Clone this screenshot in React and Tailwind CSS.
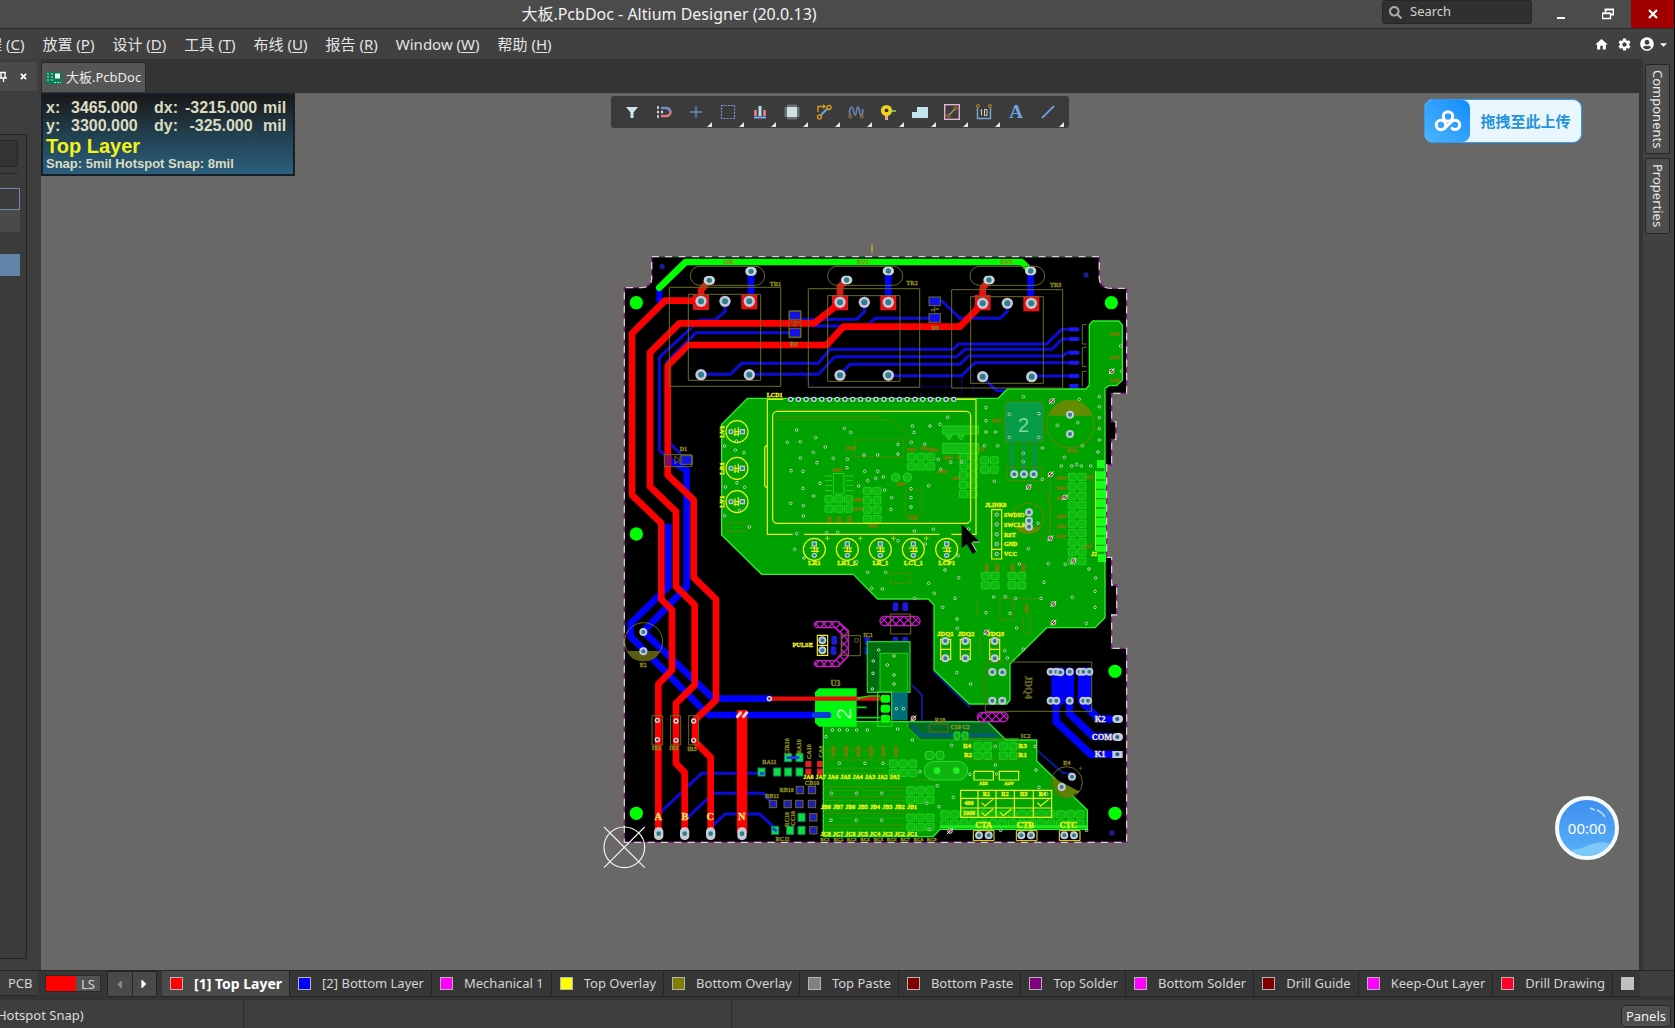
import React, { useState } from 'react';
import { FaSearch, FaUserCircle, FaCaretDown, FaCaretLeft, FaCaretRight } from 'react-icons/fa';
import { MdHome, MdSettings } from 'react-icons/md';

const MENU = [
  ['工程', 'C'],
  ['放置', 'P'],
  ['设计', 'D'],
  ['工具', 'T'],
  ['布线', 'U'],
  ['报告', 'R'],
  ['Window', 'W'],
  ['帮助', 'H'],
];

const LAYERS = [
  { name: '[1] Top Layer', swatch: 'bg-[#ff0000]' },
  { name: '[2] Bottom Layer', swatch: 'bg-[#0000ff]' },
  { name: 'Mechanical 1', swatch: 'bg-[#ff00ff]' },
  { name: 'Top Overlay', swatch: 'bg-[#ffff00]' },
  { name: 'Bottom Overlay', swatch: 'bg-[#808000]' },
  { name: 'Top Paste', swatch: 'bg-[#808080]' },
  { name: 'Bottom Paste', swatch: 'bg-[#800000]' },
  { name: 'Top Solder', swatch: 'bg-[#800080]' },
  { name: 'Bottom Solder', swatch: 'bg-[#ff00ff]' },
  { name: 'Drill Guide', swatch: 'bg-[#800000]' },
  { name: 'Keep-Out Layer', swatch: 'bg-[#ff00ff]' },
  { name: 'Drill Drawing', swatch: 'bg-[#ff002a]' },
];

/* ---------- toolbar icons ---------- */

const TOOLS = [
  {
    id: 'Filter',
    art: <path d="M2 3h12L9.500 8.500V14h-3V8.500z" fill="#cfe6ee" />,
  },
  {
    id: 'Snap',
    art: (
      <g fill="none" strokeWidth="2.400">
        <path d="M5 4h6" stroke="#6d8fc9" />
        <path d="M11 12H5" stroke="#e07a80" />
        <path d="M10.500 4a4 4 0 0 1 0 8" stroke="#e07a80" />
        <path d="M10 4a4 4 0 0 1 4 3.500" stroke="#6d8fc9" />
        <path d="M1 3.500h2M1 8h2M1 12.500h2M5 8h2" stroke="#d8d8d8" />
      </g>
    ),
  },
  { id: 'Move', menu: true, art: <path d="M8 2v12M2 8h12" stroke="#6d8fc9" strokeWidth="1.300" /> },
  {
    id: 'Select',
    menu: true,
    art: <rect x="1.500" y="1.500" width="13" height="13" fill="none" stroke="#7f93d6" strokeWidth="1.200" strokeDasharray="2 1.200" />,
  },
  {
    id: 'Align',
    menu: true,
    art: (
      <g>
        <path d="M2 13.500h12" stroke="#7fa8e8" strokeWidth="2" />
        <path d="M3.500 6v6M12.500 6v6" stroke="#e8808a" strokeWidth="2.600" />
        <path d="M8 2v10" stroke="#b7e2ea" strokeWidth="3" />
      </g>
    ),
  },
  {
    id: 'Component',
    menu: true,
    art: (
      <g>
        <path d="M4 .5v15M6 .5v15M8 .5v15M10 .5v15M12 .5v15M.5 4h15M.5 6h15M.5 8h15M.5 10h15M.5 12h15" stroke="#b9c7cc" strokeWidth=".8" />
        <rect x="3" y="3" width="10" height="10" rx="1" fill="#cfdfe4" />
      </g>
    ),
  },
  {
    id: 'Route',
    menu: true,
    art: (
      <g fill="none" strokeWidth="1.400">
        <path d="M5 11l7-7" stroke="#6aa6dc" strokeWidth="2" />
        <path d="M2 8V2.500h7M7 .8l2 1.700-2 1.700" stroke="#d8981c" />
        <circle cx="3.500" cy="13" r="2" stroke="#d8981c" />
        <circle cx="13" cy="3.500" r="2" stroke="#d8981c" />
      </g>
    ),
  },
  {
    id: 'Tune',
    menu: true,
    art: (
      <g fill="none" strokeWidth="1.600">
        <path d="M2 11C1 6 2 3 4 3s1 8 3 8 1-8 3-8 1 8 3 8 2-3 1.500-6" stroke="#6b86b8" />
        <circle cx="2.200" cy="12.500" r="1.500" stroke="#a8882c" strokeWidth="1" />
        <circle cx="13.800" cy="12.500" r="1.500" stroke="#a8882c" strokeWidth="1" />
      </g>
    ),
  },
  {
    id: 'Via',
    menu: true,
    art: (
      <g>
        <path d="M9 7h7" stroke="#6cc04a" strokeWidth="2" />
        <path d="M6.500 8v8" stroke="#e6a2a0" strokeWidth="3" />
        <circle cx="6.500" cy="6.500" r="3.800" fill="none" stroke="#f2d21c" strokeWidth="3.600" />
      </g>
    ),
  },
  { id: 'Polygon', menu: true, art: <path d="M0 14V8h5V3h11v11z" fill="#c4e4ec" /> },
  {
    id: 'Room',
    menu: true,
    art: (
      <g fill="none">
        <rect x=".7" y=".7" width="14.600" height="14.600" stroke="#e6b0d4" strokeWidth="1.400" />
        <path d="M5.500 10.500l5-5" stroke="#8fa06a" strokeWidth="1.400" />
        <circle cx="4.500" cy="11.500" r="1.500" stroke="#d8981c" />
        <circle cx="11.500" cy="4.500" r="1.500" stroke="#d8981c" />
      </g>
    ),
  },
  {
    id: 'Dimension',
    menu: true,
    art: (
      <g fill="none">
        <path d="M1.500 4v10.500h13V4" stroke="#79a7dc" strokeWidth="1.400" />
        <circle cx="2" cy="2" r="1.500" stroke="#c08c24" />
        <circle cx="14" cy="2" r="1.500" stroke="#c08c24" />
        <path d="M5.500 5.500v6M4.500 6.500l1-1M8.500 5.500h2.500v6H8.500z" stroke="#d8d2c0" />
      </g>
    ),
  },
  {
    id: 'Text',
    art: (
      <text x="10" y="17" textAnchor="middle" fontSize="19" fontWeight="bold" fontFamily="Liberation Serif, serif" fill="#6fa4e4">
        A
      </text>
    ),
  },
  { id: 'Line', menu: true, art: <path d="M2 14L14 2" stroke="#6c9be0" strokeWidth="1.800" /> },
];

function ToolBar() {
  return (
    <div className="flex h-8 rounded-[3px] bg-[#3b3b3b] px-[5px]" role="toolbar">
      {TOOLS.map((t) => (
        <button key={t.id} type="button" title={t.id} className="relative flex w-8 items-center justify-center">
          {t.id === 'Text' ? (
            <svg viewBox="0 0 20 22" className="h-[22px] w-5" aria-hidden>
              {t.art}
            </svg>
          ) : (
            <svg viewBox="0 0 16 16" className="h-4 w-4" aria-hidden>
              {t.art}
            </svg>
          )}
          {t.menu && (
            <svg viewBox="0 0 5 5" className="absolute right-0 bottom-px h-[5px] w-[5px]" aria-hidden>
              <path d="M5 0v5H0z" fill="#e4e4e4" />
            </svg>
          )}
        </button>
      ))}
    </div>
  );
}

/* ---------- board drawing, 3 units per screen pixel ---------- */

const RED = '#ff0000';
const BLUE = '#0000ff';
const OLIVE = '#6b6b1e';
const YEL = '#f4f41a';

const OUTLINE =
  'M155 50H1498V115Q1500 145 1535 145H1580V460H1535V545H1548V598H1535V675H1520V952H1535V1035H1550V1125H1535V1225H1580V1807H73V143H125Q155 140 155 115Z';

const TOP_POUR =
  'M443 475L365 553V885L485 1003H760L833 1077H985L1002 1095V1290L1108 1392H1220L1230 1380V1272L1340 1163H1485L1515 1133V445L1527 437H1550L1567 420V255L1557 243H1478L1468 255V435L1458 447H1222L1195 475Z';

const BOTTOM_POUR =
  'M690 1445H1162L1218 1500H1310V1563L1462 1710V1768H1020L1000 1790H670V1462Z';

const THIN_BLUE = [
  'M375 200V215L345 240H300L178 352V630L215 665',
  'M570 278H288L200 366V600L260 660',
  'M303 403H390L425 370H655L690 328H1060L1075 312H1340L1385 268H1435',
  'M448 403H655L705 350H1070L1095 328H1355L1387 297H1435',
  'M720 403L750 373H1080L1105 348H1390L1400 338H1435',
  'M865 407H1085L1125 368H1435',
  'M1295 408H1435',
  'M600 238H770L793 215V190M640 258H800L825 235H985',
  'M1025 183L1080 235H1200L1222 215V190',
  'M1148 412L1190 452H1230',
  'M178 1720L305 1600H480',
  'M255 1740L340 1660H490L515 1690',
  'M335 1760L375 1722H480L525 1765',
];

const RED_TRACES = [
  'M303 182H195L96 280V765L184 850V1078L216 1110V1290L175 1332V1770',
  'M718 190L642 250H238L150 338V740L228 815V1040L284 1095V1335L228 1390V1570L254 1597V1770',
  'M1148 190L1080 260H730L680 315H265L203 377V705L281 780V1012L348 1078V1380L285 1440V1505L332 1552V1770',
];

const ROUND_PADS = [
  [303, 184], [375, 184], [448, 184], [720, 187], [793, 187], [865, 187],
  [1148, 190], [1222, 190], [1294, 190], [303, 404], [448, 404], [720, 406],
  [865, 406], [1148, 410], [1295, 410],
];
const OVAL_PADS = [[328, 121], [453, 94], [740, 120], [865, 93], [1167, 120], [1292, 93]];
const RED_PADS = [[303, 186], [448, 184], [720, 187], [865, 187], [1148, 187], [1294, 190]];

const VIAS = [
  [590, 570], [562, 607], [601, 605], [647, 593], [676, 621], [640, 637], [601, 654], [651, 668], [700, 655], [742, 658],
  [733, 565], [752, 577], [573, 692], [609, 694], [660, 730], [609, 745], [641, 768], [572, 790], [741, 683], [794, 694],
  [833, 645], [792, 645], [833, 694], [827, 715], [776, 738], [409, 603], [406, 630], [374, 618], [432, 638], [411, 728],
  [376, 741], [434, 742], [374, 827], [418, 811], [448, 861], [590, 881], [584, 928], [612, 954], [680, 878], [713, 877],
  [803, 997], [815, 1045], [770, 965], [937, 558], [942, 577], [1020, 553], [1043, 532], [990, 558], [894, 613], [934, 607],
  [894, 642], [974, 613], [1015, 658], [1022, 688], [1052, 667], [1084, 666], [850, 711], [803, 722], [854, 750],
  [933, 746], [986, 737], [875, 773], [933, 773], [933, 801], [610, 797], [610, 828], [1158, 503], [1158, 542], [1158, 576],
  [1187, 576], [1153, 617], [1193, 617], [1270, 640], [1270, 665], [1183, 724], [1327, 718], [1270, 470], [1228, 523], [1317, 521],
  [1228, 592], [1316, 592], [1327, 624], [1372, 556], [1433, 548], [1447, 617], [1393, 652], [1430, 673], [1384, 678], [1415, 678],
  [1444, 678], [1472, 678], [1438, 478], [1498, 470], [1498, 500], [1498, 533], [1498, 566], [1498, 600], [1494, 636], [1565, 394],
  [1562, 318], [873, 808], [943, 873], [1000, 868], [894, 902], [1106, 867], [976, 912], [1075, 947], [1035, 990], [1076, 1013],
  [986, 1030], [857, 997], [847, 1047], [944, 1075], [1003, 1060], [1065, 1075], [1028, 1102], [1071, 1137], [1072, 1165],
  [1181, 1071], [1216, 1070], [1247, 1075], [1323, 1075], [1332, 1027], [1345, 971], [1396, 973], [1417, 1072], [1467, 987],
  [1487, 1014], [1485, 1054], [1485, 1102], [1459, 1150], [1285, 926], [1258, 972], [1314, 850], [1230, 1120], [1158, 1118],
  [1250, 1164], [1270, 1228], [1214, 1232], [1222, 1254], [1070, 1298], [1112, 1332], [836, 1230], [820, 1263], [819, 1300],
  [817, 1347], [882, 1248], [862, 1275], [882, 1305], [882, 1332], [889, 1406], [910, 1406], [697, 1470], [718, 1470], [742, 1470],
  [770, 1470], [802, 1470], [678, 1490], [893, 1467], [937, 1500], [1055, 1516], [1186, 1519], [1186, 1575], [1190, 1602],
  [1110, 1603], [1305, 1519], [1308, 1590], [1317, 1642], [1012, 1637], [980, 1690], [960, 1595], [718, 1570], [795, 1570],
  [849, 1570], [695, 1660], [769, 1660], [845, 1660], [693, 1741], [769, 1741], [845, 1741], [1060, 1672], [1340, 1662],
  [1202, 1771], [1460, 1771], [1017, 1700], [988, 1768],
];

const DRILLED = [[1535, 394], [1356, 483], [1352, 703], [1286, 741], [1395, 772], [1351, 895], [1420, 963], [1360, 1092], [1360, 1148], [1159, 1177], [940, 1435], [1050, 1773]];

// small groups of surface pads: x, y, columns, rows
const PAD_GROUPS = [
  [922, 640, 3, 2], [1080, 640, 2, 2], [1078, 695, 2, 3], [1142, 650, 2, 2], [1405, 700, 2, 10], [1144, 997, 2, 2],
  [1224, 997, 2, 2], [675, 767, 3, 2], [790, 742, 2, 4], [1122, 1508, 2, 2], [1198, 1508, 2, 2], [868, 1560, 3, 2],
  [920, 1640, 3, 2], [920, 1722, 3, 2], [1022, 1712, 15, 2],
];

const LED_ROW = [643, 742, 841, 940, 1040];
const LED_NAMES = ['LR1', 'LR1_L', 'LR_1', 'LC1_1', 'LCP1'];

function Track({ d, c, w }) {
  return <path d={d} fill="none" stroke={c} strokeWidth={w} strokeLinecap="round" strokeLinejoin="round" />;
}

function Pad({ x, y, r = 16, hole = 8 }) {
  return (
    <g>
      <circle cx={x} cy={y} r={r} fill="#c6c6dc" />
      <circle cx={x} cy={y} r={hole} fill="#2b7f86" />
    </g>
  );
}

function Label({ x, y, size = 18, c = YEL, anchor = 'middle', children, rotate }) {
  return (
    <text
      x={x}
      y={y}
      fontSize={size}
      fill={c}
      stroke={c}
      strokeWidth="1"
      textAnchor={anchor}
      fontWeight="bold"
      fontFamily="Liberation Serif, serif"
      transform={rotate ? `rotate(${rotate} ${x} ${y})` : undefined}
    >
      {children}
    </text>
  );
}

function Led({ x, y }) {
  return (
    <g>
      <circle cx={x} cy={y} r="33" fill="none" stroke={YEL} strokeWidth="3.500" />
      <rect x={x - 8} y={y - 24} width="16" height="16" fill="#b8ccd8" />
      <rect x={x - 4} y={y - 20} width="8" height="8" fill="#2b7f86" />
      <circle cx={x} cy={y + 18} r="8" fill="#b8ccd8" />
      <circle cx={x} cy={y + 18} r="4" fill="#2b7f86" />
      <path d={`M${x - 14} ${y - 4}h28M${x - 10} ${y + 6}h24M${x} ${y - 8}v16M${x + 8} ${y - 6}v16`} stroke={YEL} strokeWidth="3.500" />
    </g>
  );
}

function Board() {
  return (
    <svg viewBox="0 0 1620 1920" className="absolute top-[147px] left-[559px] h-[640px] w-[540px]" aria-label="PCB layout">
      <defs>
        <pattern id="mesh" width="24" height="24" patternUnits="userSpaceOnUse">
          <path d="M0 0l24 24M24 0L0 24" stroke="#c41ec4" strokeWidth="4" />
        </pattern>
        <pattern id="weave" width="6" height="6" patternUnits="userSpaceOnUse">
          <rect width="6" height="6" fill="#00a400" />
          <path d="M0 0h3v3H0z" fill="#009c00" />
        </pattern>
      </defs>

      <path d={OUTLINE} fill="#000" stroke="#8a1c8a" strokeWidth="4" />
      <path d={OUTLINE} fill="none" stroke="#d0d0d0" strokeWidth="4" strokeDasharray="22 18" />
      <path d="M155 50H1498" stroke="#1c6a2c" strokeWidth="4" strokeDasharray="18 22" strokeDashoffset="-22" />
      <path d="M816 13v25" stroke="#b8b830" strokeWidth="4" />

      {/* bottom copper */}
      <Track d="M1085 407V470M1120 400V460M600 390L640 440H1060" c="#06064c" w={5} />
      {THIN_BLUE.map((d) => (
        <Track key={d} d={d} c="#0c0cd8" w={9} />
      ))}
      <Track d="M178 145V180" c={BLUE} w={18} />
      <Track d="M453 94V184M865 93V187M1292 93V190" c={BLUE} w={20} />
      <Track d="M215 665L260 690V1040L130 1175L340 1376H508" c={BLUE} w={20} />
      <Track d="M205 860V1040L92 1150V1190L325 1425H685" c={BLUE} w={20} />
      <Track d="M1367 1295V1382M1383 1295V1382M1410 1295V1382M1447 1295V1382M1460 1295V1382" c={BLUE} w={26} />
      <Track d="M1368 1390V1445L1472 1543H1550M1408 1390V1420L1480 1490H1530M1450 1390L1495 1437H1530" c={BLUE} w={22} />
      <Track d="M1002 1295L1108 1400M935 1335L966 1365V1445M1310 1530L1390 1600H1415" c="#0a1a90" w={6} />
      {[[585, 226], [585, 278], [1004, 184], [1004, 234], [260, 660]].map(([x, y]) => (
        <rect key={`${x}-${y}`} x={x - 17} y={y - 13} width="34" height="26" fill="#1212e8" stroke={OLIVE} strokeWidth="3" />
      ))}
      {[268, 297, 338, 368, 408, 438].map((y) => (
        <rect key={y} x="1408" y={y - 6} width="28" height="12" fill="#1a1af0" />
      ))}
      {[[106, 349], [135, 349], [106, 452], [135, 452], [22, 452], [-80, 481], [-78, 450], [22, 481]].map(([x, y]) => (
        <rect key={`${x}-${y}`} x={x + 772} y={y + 738} width="17" height="26" rx="5" fill="#1a1ad8" />
      ))}

      {/* top copper */}
      <Track d="M178 143L257 66H1265L1292 93" c="#00ff00" w={20} />
      {RED_PADS.map(([x, y]) => (
        <rect key={`${x}-${y}`} x={x - 24} y={y - 22} width="48" height="46" fill="#e41414" />
      ))}
      {RED_TRACES.map((d) => (
        <Track key={d} d={d} c={RED} w={20} />
      ))}
      <Track d="M328 121L303 150V184M740 120L720 140V187M1167 120L1148 145V187" c="#e61414" w={20} />
      <path d="M426 1410V1780" stroke={RED} strokeWidth="31" />
      <rect x="195" y="645" width="20" height="32" fill="#8a0c5c" />

      {/* pours */}
      <path d={TOP_POUR} fill="url(#weave)" stroke="#2cf02c" strokeWidth="4" />
      <path d={BOTTOM_POUR} fill="url(#weave)" stroke="#2cf02c" strokeWidth="4" />
      <path d="M923 1446H1160L1216 1500H962L923 1462Z" fill="#006c24" stroke="#20c020" strokeWidth="3" />
      <path d="M935 1455L960 1486H1190" fill="none" stroke="#005c7c" strokeWidth="9" />
      <rect x="802" y="1205" width="128" height="152" fill="#006e10" stroke="#20d020" strokeWidth="4" />
      <rect x="840" y="1240" width="83" height="117" fill="#009a00" stroke="#20d020" strokeWidth="3" />
      <rect x="875" y="1357" width="48" height="84" fill="#007078" />
      <path d="M645 1357L657 1345H770V1460H657L645 1448Z" fill="#00f810" />
      <Track d="M508 1376H840" c="#e80c0c" w={13} />
      <path d="M645 1425H685" stroke="#0a3ce0" strokeWidth="18" strokeLinecap="round" />
      <path d="M770 1376L808 1368H840M770 1402H800M770 1433H840" stroke="#00e010" strokeWidth="5" fill="none" />
      <rect x="833" y="1355" width="42" height="104" fill="none" stroke="#20d020" strokeWidth="4" />
      {[1376, 1406, 1436].map((y) => (
        <rect key={y} x="842" y={y - 12} width="28" height="24" rx="6" fill="#00ff00" />
      ))}
      <text x="722" y="1421" fontSize="62" fill="#a8f0a8" fontFamily="Liberation Sans, sans-serif" textAnchor="middle" transform="rotate(-90 738 1405)">
        2
      </text>

      {/* bottom overlay seen through the pour */}
      <g fill="none" stroke="#508a00" strokeWidth="3">
        <path d="M525 540H870Q910 550 930 610M765 600H910V650H765ZM915 750h50v75h-50zM530 530H840M880 860V900L960 960" />
        <path d="M1300 740Q1345 750 1350 800V880M1310 910L1350 870V700M1200 1075h40v65h-40zM1220 1075H1330M1270 1130v50h20v-60" />
        <path d="M870 1000h60v30h-60zM1130 1075v60M1140 1190v60M380 848h60v25h-60z" />
        <path d="M680 1530h150M680 1560h180M670 1640h260M670 1670h260M670 1720h260M670 1755h260M940 1620h80M1100 1495h155v65h-155z" />
        <path d="M680 1600h180M680 1585h180M670 1652h250M670 1682h250M670 1734h250M670 1766h250" stroke="#2aa000" />
      </g>
      <rect x="1213" y="485" width="118" height="122" rx="12" fill="#089c48" stroke="#508a00" strokeWidth="3" />
      <path d="M1236 607V700M1272 607V700M1305 607V700" stroke="#0b9440" strokeWidth="14" />
      <rect x="1222" y="682" width="102" height="40" fill="none" stroke="#508a00" strokeWidth="3" />
      <text x="1271" y="577" fontSize="60" fill="#7cd89a" fontFamily="Liberation Sans, sans-serif" textAnchor="middle">
        2
      </text>
      <circle cx="1411" cy="553" r="71" fill="none" stroke="#508a00" strokeWidth="4" />
      <path d="M1344 527A71 71 0 0 1 1478 527Z" fill="#648c00" />
      <circle cx="1285" cy="835" r="46" fill="none" stroke="#508a00" strokeWidth="4" />
      <path d="M1246 860A46 46 0 0 0 1324 860Z" fill="#648c00" />
      {[[752, 625], [712, 691], [935, 630], [975, 626], [1000, 630], [1045, 653], [1085, 653], [1110, 653], [1027, 695], [1073, 715],
        [903, 733], [940, 835], [775, 780], [775, 808], [1085, 628], [1140, 628], [1190, 543], [1417, 633], [1385, 715], [1385, 745],
        [1385, 775], [1385, 830], [1385, 860], [1385, 890], [1465, 712], [1545, 283], [1545, 353], [1545, 422], [1460, 920],
        [820, 858]].map(([x, y]) => (
        <rect key={`${x}-${y}`} x={x - 14} y={y - 6} width="28" height="11" fill="#7c7c00" opacity=".8" />
      ))}
      {[688, 717, 748].map((x) => (
        <rect key={x} x={x - 6} y="828" width="12" height="24" fill="#7c7c00" opacity=".8" />
      ))}
      {[700, 738, 775, 813, 850, 888].map((x) => (
        <rect key={x} x={x - 6} y="1517" width="12" height="34" fill="#7c7c00" opacity=".8" />
      ))}
      {[[380, 978], [412, 978], [458, 978], [490, 978], [500, 1100]].map(([x, y]) => (
        <rect key={x} x={x + 774} y={y - 8} width="12" height="28" fill="#7c7c00" opacity=".8" />
      ))}

      {/* surface pads */}
      {PAD_GROUPS.map(([gx, gy, cols, rows]) =>
        Array.from({ length: cols * rows }, (_, i) => (
          <rect
            key={`${gx}-${gy}-${i}`}
            x={gx + (i % cols) * 29}
            y={gy + Math.floor(i / cols) * 28}
            width="24"
            height="22"
            rx="3"
            fill="#10b810"
            stroke="#22dc22"
            strokeWidth="2.500"
          />
        ))
      )}
      <g fill="#12bc12" stroke="#24e024" strokeWidth="2.500">
        <rect x="1028" y="558" width="108" height="24" />
        <rect x="1028" y="610" width="108" height="30" />
        <path d="M1036 586h22l-11 14zM1072 586h22l-11 14z" />
        <circle cx="887" cy="712" r="13" />
        <circle cx="922" cy="712" r="13" />
        <rect x="700" y="700" width="32" height="62" fill="none" />
        <path d="M674 708h22M674 722h22M674 737h22M674 752h22M738 708h22M738 722h22M738 737h22M738 752h22" />
      </g>
      <rect x="973" y="1564" width="130" height="56" rx="28" fill="#10b410" stroke="#28e028" strokeWidth="3" />
      <circle cx="1011" cy="1592" r="10" fill="#20f020" />
      <circle cx="1069" cy="1592" r="10" fill="#20f020" />
      <g fill="#10b410" stroke="#28e028" strokeWidth="3">
        <rect x="976" y="1534" width="26" height="24" rx="8" />
        <rect x="1008" y="1534" width="24" height="24" rx="8" />
        <rect x="1062" y="1476" width="18" height="22" rx="6" />
        <rect x="1086" y="1476" width="18" height="22" rx="6" />
      </g>
      <path d="M1020 1760H1462" stroke="#20e820" strokeWidth="8" />
      <path d="M1487 693V932" stroke={YEL} strokeWidth="3" />
      <path d="M1503 694V935" stroke="#18ff18" strokeWidth="30" strokeDasharray="24 4" />
      <path d="M1503 660v24M1506 942v24" stroke="#18ff18" strokeWidth="24" />

      {/* pads under the pulse block */}
      {[[564, 1553], [598, 1553], [531, 1596], [564, 1596], [598, 1596], [484, 1596], [604, 1732], [525, 1771], [570, 1771], [604, 1771]].map(([x, y]) => (
        <rect key={`${x}-${y}`} x={x - 10} y={y - 12} width="21" height="24" fill="#0ce03c" stroke="#0a8a6a" strokeWidth="3" />
      ))}
      <path d="M560 1553h38M480 1600h12M518 1764l12 10" stroke="#1a3cff" strokeWidth="8" />
      {[[600, 1650], [636, 1650], [519, 1692], [563, 1692], [598, 1692], [636, 1692], [640, 1732], [640, 1771]].map(([x, y]) => (
        <rect key={`${x}-${y}`} x={x - 11} y={y - 11} width="22" height="22" fill="#1c1cc4" stroke={OLIVE} strokeWidth="3" />
      ))}
      {[[625, 1572], [660, 1572], [625, 1595], [660, 1595]].map(([x, y]) => (
        <rect key={`${x}-${y}`} x={x - 9} y={y - 9} width="18" height="18" fill="#e42020" />
      ))}

      {/* keep-out meshes */}
      <g fill="url(#mesh)" stroke="#c41ec4" strokeWidth="4">
        <path d="M650 1145H715L745 1172V1248L715 1280H650Q635 1271 650 1262H706L724 1240V1182L706 1163H650Q635 1154 650 1145Z" />
        <rect x="840" y="1129" width="120" height="28" rx="14" />
        <rect x="1132" y="1417" width="92" height="28" rx="14" />
      </g>

      {/* overlay outlines */}
      <g fill="none" stroke={OLIVE} strokeWidth="3">
        <path d="M208 142H542V439H208ZM265 163H482V421H265ZM625 146H959V442H625ZM683 167H900V424H683ZM1055 149H1388V444H1055ZM1112 170H1330V430H1112Z" />
        <rect x="271" y="79" width="223" height="57" rx="28" />
        <rect x="683" y="79" width="225" height="57" rx="28" />
        <rect x="1110" y="79" width="224" height="57" rx="28" />
        <path d="M1460 254H1447V312H1460M1460 322H1447V380H1460M1460 394H1447V440" />
        <path d="M193 644h82v36h-82zM225 648l14 12-14 12zM240 648v24M1156 1266H1475V1414H1156ZM725 1187h56v60h-56zM872 1122h60v60h-60z" />
        <path d="M572 246h28M586 238v24M574 258l24-12M567 213h36v80h-36zM992 208h26M1004 198v20M992 214l24-10" />
        <circle cx="131" cy="1205" r="57" />
        <circle cx="769" cy="1201" r="6" />
        <circle cx="1400" cy="1627" r="47" />
        <path d="M156 1427h32v88h-32zM212 1427h30v88h-30zM266 1427h30v88h-30zM988 1452h56v24h-56z" />
      </g>
      <path d="M80 1233A57 57 0 0 0 182 1233Z" fill="#5c5c10" />
      <path d="M1356 1612L1440 1655L1400 1674Q1360 1665 1356 1612Z" fill="#5f8000" />

      {/* LCD outline */}
      <g fill="none" stroke={YEL} strokeWidth="3.500">
        <path d="M550 478H502V883H578M612 883H1018M1054 883H1128V478H1070M502 615L494 622V738L502 744" />
        <rect x="518" y="514" width="594" height="336" rx="14" />
      </g>
      {Array.from({ length: 22 }, (_, i) => (
        <circle key={i} cx={572 + i * 23.300} cy="478" r="6" fill="#225" stroke="#c8d8e0" strokeWidth="4" />
      ))}
      <Label x="524" y="470">LCD1</Label>
      {LED_ROW.map((x, i) => (
        <g key={x}>
          <Led x={x} y={928} />
          <Label x={x} y={975} size={20}>{LED_NAMES[i]}</Label>
          {i < 4 && <path d={`M${x + 32} 895h14M${x + 39} 888v14`} stroke={YEL} strokeWidth="2" />}
        </g>
      ))}
      {[575, 685, 785].map((y, i) => (
        <g key={y}>
          <g transform={`rotate(90 411 ${y})`}>
            <Led x={411} y={y} />
          </g>
          <Label x={373} y={y} size={20} rotate={-90}>{['LV1', 'LR1', 'LY1'][i]}</Label>
        </g>
      ))}

      {/* headers and jumpers */}
      <g fill="none" stroke={YEL} strokeWidth="3.500">
        <path d="M1175 809h30v148h-30zM1175 928h30M652 1186h31v60h-31zM652 1216h31" />
        <path d="M1022 1198h30v60h-30zM1022 1228h30M1081 1198h30v60h-30zM1081 1228h30M1169 1198h30v60h-30zM1169 1228h30" />
        <path d="M1122 1594h58v26h-58zM1198 1594h58v26h-58zM1082 1651h273v81h-273zM1082 1675h273M1082 1704h273M1134 1651v81M1188 1651v81M1243 1651v81M1300 1651v81" />
        <path d="M1145 1688l10 10 24-20M1312 1688l10 10 24-20M1145 1717l10 10 24-20M1200 1717l10 10 24-20" />
      </g>
      <path d="M1120 1772h62v30h-62zM1249 1772h62v30h-62zM1378 1772h62v30h-62z" fill="#000" stroke={YEL} strokeWidth="3" />
      {[824, 853, 883, 912, 942].map((y, i) => (
        <g key={y}>
          <circle cx="1190" cy={y} r="5" fill="#1a8a50" stroke="#c8e0c8" strokeWidth="3" />
          <Label x={1212} y={y + 7} anchor="start">{['SWDIO', 'SWCLK', 'RST', 'GND', 'VCC'][i]}</Label>
        </g>
      ))}
      <Label x={1187} y={802}>JLINK0</Label>
      <Label x={608} y={1222} size={19}>PULSE</Label>
      <Label x={1036} y={1189} size={20}>JDQ1</Label>
      <Label x={1098} y={1189} size={20}>JDQ2</Label>
      <Label x={1187} y={1189} size={20}>JDQ3</Label>
      <Label x={1482} y={948}>J2</Label>
      <Label x={1101} y={1523} size={20}>R4</Label>
      <Label x={1104} y={1551} size={20}>R2</Label>
      <Label x={1268} y={1523} size={20}>R3</Label>
      <Label x={1268} y={1551} size={20}>R1</Label>
      <Label x={1150} y={1636} size={15}>A5S</Label>
      <Label x={1227} y={1636} size={15}>A4V</Label>
      {['R1', 'R2', 'R3', 'R4'].map((r, i) => (
        <Label key={r} x={1159 + i * 56} y={1669}>{r}</Label>
      ))}
      <Label x={1107} y={1694}>400</Label>
      <Label x={1107} y={1725}>1000</Label>
      <Label x={1151} y={1764} size={25}>CTA</Label>
      <Label x={1276} y={1764} size={25}>CTB</Label>
      <Label x={1405} y={1764} size={25}>CTC</Label>
      {[['JA', 625, 1616], ['JB', 677, 1708], ['JC', 677, 1789]].map(([p, x0, y]) =>
        [8, 7, 6, 5, 4, 3, 2, 1].map((n, i) => (
          <Label key={`${p}${n}`} x={x0 + i * 37} y={y}>{`${p}${n}`}</Label>
        ))
      )}

      {/* reference designators, bottom side */}
      <g>
        <Label x={385} y={73} c="#7c9a10">10R</Label>
        <Label x={789} y={73} c="#7c9a10">RV2</Label>
        <Label x={1219} y={73} c="#7c9a10">RV3</Label>
        <Label x={526} y={137} c="#8a8a20">TR1</Label>
        <Label x={936} y={136} c="#8a8a20">TR2</Label>
        <Label x={1367} y={142} c="#8a8a20">TR3</Label>
        <Label x={582} y={319} c="#8a8a20">D2</Label>
        <Label x={1006} y={270} c="#8a8a20">D3</Label>
        <Label x={250} y={634} c="#8a8a20">D1</Label>
        <Label x={130} y={1281} c="#8a8a20">E1</Label>
        <Label x={170} y={1531} c="#8a8a20">IR1</Label>
        <Label x={222} y={1531} c="#8a8a20">IR2</Label>
        <Label x={276} y={1533} c="#8a8a20">IR3</Label>
        <Label x={706} y={1337} size={24} c="#8a8a20">U3</Label>
        <Label x={508} y={1573} c="#8a8a20">RA11</Label>
        <Label x={560} y={1655} c="#8a8a20">RB10</Label>
        <Label x={516} y={1675} c="#8a8a20">RB11</Label>
        <Label x={636} y={1635} c="#8a8a20">CB10</Label>
        <Label x={548} y={1803} c="#8a8a20">RC11</Label>
        <Label x={567} y={1520} c="#8a8a20" rotate={-90}>CIR10</Label>
        <Label x={602} y={1520} c="#8a8a20" rotate={-90}>RA10</Label>
        <Label x={634} y={1535} c="#8a8a20" rotate={-90}>CA10</Label>
        <Label x={668} y={1535} c="#8a8a20" rotate={-90}>CA9</Label>
        <Label x={568} y={1738} c="#8a8a20" rotate={-90}>RC10</Label>
        <Label x={586} y={1735} c="#8a8a20" rotate={-90}>CC10</Label>
        <Label x={804} y={1190} c="#8a8a20">IC1</Label>
        <Label x={1277} y={1493} c="#8a8a20">IC2</Label>
        <Label x={1020} y={1445} c="#8a8a20">R18</Label>
        <Label x={1080} y={1468} c="#8a9a10">C19 C2</Label>
        <Label x={1400} y={1574} c="#8a8a20">E4</Label>
        <Label x={1274} y={1342} size={28} c={OLIVE} rotate={90}>JDQ4</Label>
        <path d="M1436 1585h12M1442 1579v12" stroke={OLIVE} strokeWidth="2" />
        {Array.from({ length: 9 }, (_, i) => (
          <Label key={i} x={675 + i * 40} y={1803} size={15} c="#8a9a10">{`RC${i + 1}`}</Label>
        ))}
      </g>

      {/* vias and pads on top of everything */}
      {VIAS.map(([x, y]) => (
        <circle key={`${x}-${y}`} cx={x} cy={y} r="4" fill="#0a7a0a" stroke="#c4ecc4" strokeWidth="2.500" />
      ))}
      {DRILLED.map(([x, y]) => (
        <g key={`${x}-${y}`}>
          <circle cx={x} cy={y} r="7" fill="#7c3030" stroke="#d8d0c8" strokeWidth="3" />
          <path d={`M${x - 9} ${y + 9}L${x + 9} ${y - 9}`} stroke="#e8e8e8" strokeWidth="3" />
        </g>
      ))}
      {ROUND_PADS.map(([x, y]) => (
        <Pad key={`${x}-${y}`} x={x} y={y} r={17} hole={9} />
      ))}
      {OVAL_PADS.map(([x, y]) => (
        <g key={`${x}-${y}`}>
          <rect x={x - 17} y={y - 13} width="34" height="26" rx="13" fill="#cfd4e2" />
          <circle cx={x} cy={y} r="8" fill="#2b7f86" />
        </g>
      ))}
      {[176, 254, 332, 426].map((x) => (
        <g key={x}>
          <rect x={x - 14} y="1762" width="28" height="38" rx="13" fill="#c6ccd4" />
          <circle cx={x} cy="1781" r="7" fill="#2b7f86" />
        </g>
      ))}
      {[[130, 1176], [130, 1234], [1410, 524], [1410, 582], [1243, 703], [1272, 703], [1301, 703], [1287, 817], [1287, 842], [1287, 860],
        [1036, 1203], [1036, 1255], [1096, 1203], [1096, 1255], [1184, 1203], [1184, 1255], [1177, 1296], [1207, 1297], [1177, 1382], [1207, 1382],
        [1352, 1295], [1369, 1295], [1381, 1297], [1409, 1295], [1439, 1295], [1450, 1295], [1468, 1295], [1352, 1382], [1369, 1382], [1409, 1382],
        [1450, 1382], [1464, 1382], [1416, 1610], [1385, 1641], [667, 1201], [667, 1231], [1137, 1786], [1166, 1786], [1264, 1786], [1293, 1786],
        [1393, 1786], [1422, 1786]].map(([x, y]) => (
        <Pad key={`${x}-${y}`} x={x} y={y} r={12} hole={6} />
      ))}
      {[[172, 1441], [172, 1499], [228, 1443], [228, 1501], [281, 1443], [281, 1501], [508, 1376]].map(([x, y]) => (
        <circle key={`${x}-${y}`} cx={x} cy={y} r="6" fill="#803030" stroke="#dcdcdc" strokeWidth="4" />
      ))}
      <path d="M412 1430l10-12M430 1430l10-12" stroke="#e0d0d0" strokeWidth="9" strokeLinecap="round" />
      {[[1552, 1437], [1552, 1491]].map(([x, y]) => (
        <g key={y}>
          <rect x={x - 15} y={y - 12} width="32" height="24" rx="12" fill="#c6ccdc" />
          <circle cx={x} cy={y} r="6" fill="#2b5f86" />
        </g>
      ))}
      <rect x="1537" y="1533" width="31" height="21" fill="#c6ccdc" />
      <circle cx="1552" cy="1543" r="6" fill="#2b5f86" />
      <Label x={1500} y={1446} size={25} c="#f0e8a0">K2</Label>
      <Label x={1506} y={1499} size={25} c="#f0e8a0">COM</Label>
      <Label x={1500} y={1552} size={25} c="#f0e8a0">K1</Label>
      {[['A', 175], ['B', 255], ['C', 331], ['N', 425]].map(([t, x]) => (
        <Label key={t} x={x} y={1740} size={31} c="#f8e070">{t}</Label>
      ))}

      {/* mounting holes */}
      {[[109, 188], [1534, 188], [109, 882], [1545, 1294], [109, 1720], [1545, 1720]].map(([x, y]) => (
        <circle key={`${x}-${y}`} cx={x} cy={y} r="20" fill="#00ff00" />
      ))}
      {[[186, 80], [1458, 105], [1536, 1779]].map(([x, y]) => (
        <circle key={x} cx={x} cy={y} r="8" fill="#1c1c98" />
      ))}

      {/* origin marker */}
      <g fill="none" stroke="#f4f4f4" strokeWidth="3.500">
        <circle cx="73" cy="1822" r="61" />
        <path d="M12 1761L134 1883M134 1761L12 1883" />
      </g>

      {/* pointer */}
      <path d="M1085 853V925L1100 912L1118 942L1130 934L1113 907H1140Z" fill="#000" />
      <path d="M1118 906H1140M1116 910l14 24" stroke="#ddd" strokeWidth="3" fill="none" />
    </svg>
  );
}

/* ---------- window pieces ---------- */

function TitleBar() {
  return (
    <header className="flex h-[29px] shrink-0 items-center border-b border-[#2b2b2b] bg-[#4b4b4b]">
      <h1 className="min-w-0 flex-1 pr-11 text-center text-[16px] leading-7 whitespace-nowrap text-[#f2f2f2]">
        大板.PcbDoc - Altium Designer (20.0.13)
      </h1>
      <label className="flex h-6 w-[150px] items-center gap-2 self-start rounded-[3px] border border-[#262626] bg-[#303030] px-1.5">
        <FaSearch className="shrink-0 text-[#a8a8a8]" size={13} aria-hidden />
        <input
          type="search"
          aria-label="Search"
          placeholder="Search"
          className="w-full min-w-0 bg-transparent text-[13px] text-white outline-none placeholder:text-[#d0d0d0]"
        />
      </label>
      <div className="ml-[5px] flex h-7 text-white">
        <button type="button" aria-label="Minimize" className="flex w-[47px] items-center justify-center">
          <span className="mt-2 h-[2px] w-2 bg-white" />
        </button>
        <button type="button" aria-label="Restore" className="flex w-[47px] items-center justify-center">
          <svg viewBox="0 0 12 12" className="h-3 w-3" fill="none" stroke="currentColor" aria-hidden>
            <path d="M3.500 4V1.500h8v5H9" strokeWidth="1.800" />
            <path d="M.5 5.500h8v5h-8zM.5 5h8" strokeWidth="1.400" />
          </svg>
        </button>
        <button type="button" aria-label="Close" className="flex w-[43px] items-center justify-center bg-[#a00000]">
          <svg viewBox="0 0 10 10" className="h-[10px] w-[10px]" stroke="currentColor" strokeWidth="2.200" aria-hidden>
            <path d="M1 1l8 8M9 1L1 9" />
          </svg>
        </button>
      </div>
    </header>
  );
}

function MenuBar() {
  return (
    <div className="flex h-[30px] shrink-0 items-center justify-between overflow-hidden bg-[#414141] text-[15px] text-[#e4e4e4]">
      <nav className="-ml-[28px] flex gap-[18px]">
        {MENU.map(([label, key]) => (
          <button key={key} type="button" className="whitespace-nowrap">
            {label} (<span className="underline underline-offset-2">{key}</span>)
          </button>
        ))}
      </nav>
      <div className="flex items-center gap-2 pr-[5px] text-white">
        <button type="button" aria-label="Home">
          <MdHome size={15} />
        </button>
        <button type="button" aria-label="Settings">
          <MdSettings size={15} />
        </button>
        <button type="button" aria-label="Account" className="flex items-center gap-1">
          <FaUserCircle size={14} />
          <FaCaretDown size={11} />
        </button>
      </div>
    </div>
  );
}

function SidePanel() {
  return (
    <aside className="flex w-[37px] shrink-0 flex-col bg-[#3e3e3e]">
      <div className="mt-[3px] flex h-[29px] items-center justify-between bg-[#4a4a4a] pr-[10px] text-white">
        <button type="button" aria-label="Pin">
          <svg viewBox="0 0 8 12" className="h-3 w-2" fill="none" stroke="currentColor" strokeWidth="1.400" aria-hidden>
            <path d="M0 1.500h6M1 1.500v5M5 1.500v5M0 7h7M3.500 7v4" />
          </svg>
        </button>
        <button type="button" aria-label="Close panel">
          <svg viewBox="0 0 8 8" className="h-[7px] w-[7px]" stroke="currentColor" strokeWidth="2" aria-hidden>
            <path d="M1 1l6 6M7 1L1 7" />
          </svg>
        </button>
      </div>
      <div className="mt-[43px] mr-[10px] mb-[11px] flex-1 border-t border-r border-b border-[#232323] bg-[#3b3b3b]">
        <div className="mt-[5px] mr-2 h-[27px] rounded-r-[3px] border border-l-0 border-[#262626] bg-[#333333]" />
        <div className="mt-[6px] mr-2 h-px bg-[#262626]" />
        <div className="mt-[14px] mr-[6px] h-[22px] border border-l-0 border-[#6d8aab]" />
        <div className="mr-[6px] h-[22px] bg-[#4a4a4a]" />
        <div className="mt-[22px] mr-[6px] h-[22px] bg-[#6085a8]" />
      </div>
    </aside>
  );
}

function HeadsUp() {
  return (
    <div className="absolute top-0 left-0 h-[83px] w-[254px] border-2 border-[#15202a] bg-linear-to-b from-[#181818] via-[#22404f] to-[#2b5f7e] pt-1 pl-[3px] font-['Liberation_Sans',Arial,sans-serif] font-bold text-[#dcdcc0]">
      <div className="grid grid-cols-[25px_83px_30px_79px_auto] text-[16px] leading-[18px] whitespace-nowrap">
        <span>x:</span>
        <span>3465.000</span>
        <span>dx:</span>
        <span className="w-[74px] text-center">-3215.000</span>
        <span>mil</span>
        <span>y:</span>
        <span>3300.000</span>
        <span>dy:</span>
        <span className="w-[74px] text-center">-325.000</span>
        <span>mil</span>
      </div>
      <p className="text-[20px] leading-[22px] text-[#f2f21c]">Top Layer</p>
      <p className="text-[13px] leading-[14px] whitespace-nowrap">Snap: 5mil Hotspot Snap: 8mil</p>
    </div>
  );
}

function UploadChip() {
  return (
    <button
      type="button"
      className="absolute top-[6px] right-[57px] flex h-11 w-[158px] items-center overflow-hidden rounded-[9px] border border-[#2f9cf4] bg-[#eaf6fe]"
    >
      <span className="flex h-full w-[45px] items-center justify-center rounded-r-lg bg-linear-to-tr from-[#4cb4fc] to-[#0a8cff]">
        <svg viewBox="0 0 28 22" className="h-[22px] w-7" fill="none" stroke="#fff" strokeWidth="3" aria-hidden>
          <circle cx="14" cy="6.500" r="4.700" />
          <circle cx="7" cy="15" r="4.700" />
          <path d="M10.500 18.500L17.500 11.800A4.700 4.700 0 1 1 18 18.400" strokeLinecap="round" />
        </svg>
      </span>
      <span className="flex-1 text-center text-[15px] font-bold text-[#2394dc]">拖拽至此上传</span>
    </button>
  );
}

function TimerBubble() {
  return (
    <div className="absolute right-[20px] bottom-[110px] flex h-16 w-16 items-center justify-center overflow-hidden rounded-full border-4 border-[#f4faff] bg-linear-to-b from-[#3f8ff0] to-[#58b0f8] text-[15px] text-white">
      <svg viewBox="0 0 56 56" className="absolute inset-0 h-14 w-14" aria-hidden>
        <path d="M10 50Q20 50 30 45T52 44L44 56H14Z" fill="#7cc8f8" />
        <path d="M31 8l5 2M38 10q5 2 8 7" stroke="#b8dcff" strokeWidth="1.500" fill="none" />
      </svg>
      <time className="relative">00:00</time>
    </div>
  );
}

function LayerBar({ active, onPick }) {
  return (
    <div className="flex h-[30px] shrink-0 items-start border-t border-b-4 border-t-[#262626] border-b-[#343434] bg-[#363636] text-[13px] leading-[25px] whitespace-nowrap text-[#d4d4d4]">
      <button type="button" className="h-[25px] w-[38px] shrink-0 border-b border-[#262626] bg-[#3e3e3e] pl-2 text-left">
        PCB
      </button>
      <div className="mt-1 ml-[7px] flex h-[17px] shrink-0 border border-[#2a2a2a]">
        <span className="w-[30px] bg-[#ff0000]" />
        <button type="button" className="w-[24px] bg-[#535353] text-center leading-4">
          LS
        </button>
      </div>
      <div className="ml-[6px] flex h-[26px] w-[50px] shrink-0 rounded-[2px] border border-[#242424] bg-[#4a4a4a]">
        <button type="button" aria-label="Previous layer" className="flex flex-1 items-center justify-center border-r border-[#262626] text-[#8a8a8a]">
          <FaCaretLeft size={13} />
        </button>
        <button type="button" aria-label="Next layer" className="flex flex-1 items-center justify-center text-white">
          <FaCaretRight size={14} />
        </button>
      </div>
      <div className="ml-[5px] flex min-w-0 flex-1 overflow-hidden border-b border-[#262626]">
        {LAYERS.map((l) => (
          <button
            key={l.name}
            type="button"
            onClick={() => onPick(l.name)}
            className={`flex shrink-0 items-center gap-[11px] border-r border-[#262626] pr-[7px] pl-2 ${
              active === l.name ? 'bg-[#4a4a4a] text-[14px] font-bold text-white' : ''
            }`}
          >
            <span className={`h-[13px] w-[13px] border border-[#b4b4b4] ${l.swatch}`} />
            {l.name}
          </button>
        ))}
        <button type="button" aria-label="Multi-Layer" className="flex shrink-0 items-center pl-2">
          <span className="h-[13px] w-[13px] bg-[#c0c0c0]" />
        </button>
      </div>
      <div className="h-full w-[34px] shrink-0 bg-[#3e3e3e]" />
    </div>
  );
}

export default function App() {
  const [layer, setLayer] = useState('[1] Top Layer');

  return (
    <div className="flex h-screen flex-col overflow-hidden border-r border-black bg-[#3e3e3e] font-['Noto_Sans','Noto_Sans_CJK_SC',sans-serif]">
      <TitleBar />
      <MenuBar />

      <div className="flex min-h-0 flex-1">
        <SidePanel />
        <main className="ml-1 flex min-w-0 flex-1 flex-col">
          <div className="flex h-[34px] shrink-0 items-end bg-[#343434] pb-px">
            <button
              type="button"
              className="flex h-[30px] items-center gap-1 rounded-t-[3px] border border-b-0 border-[#2a2a2a] bg-[#565656] px-1 text-[13px] whitespace-nowrap text-[#ececec]"
            >
              <svg viewBox="0 0 16 12" className="h-3 w-4" aria-hidden>
                <rect width="16" height="12" rx="1" fill="#0b7a55" />
                <path d="M1 2h2M1 5h2M1 8h2M5 2h2M5 5h2M5 8h2M8 10.500h7" stroke="#a8e8c8" strokeWidth="1.200" strokeDasharray="2 1" />
                <rect x="9" y="1.500" width="5" height="5" fill="#e8f4ec" />
              </svg>
              大板.PcbDoc
            </button>
          </div>
          <div className="relative min-h-0 flex-1 overflow-hidden bg-[#6a6866]">
            <Board />
            <HeadsUp />
            <div className="flex justify-center pt-[3px]">
              <ToolBar />
            </div>
            <UploadChip />
            <TimerBubble />
          </div>
        </main>
        <div className="flex w-[35px] shrink-0 flex-col items-end gap-1 border-l-4 border-[#343434] bg-[#414141] pt-[5px] pr-1">
          {['Components', 'Properties'].map((t) => (
            <button
              key={t}
              type="button"
              className="flex w-[25px] items-center justify-center rounded-[2px] border border-[#262626] bg-[#4e4e4e] py-[5px] text-[13px] leading-5 text-[#e8e8e8]"
            >
              <span className="[writing-mode:vertical-rl]">{t}</span>
            </button>
          ))}
        </div>
      </div>

      <LayerBar active={layer} onPick={setLayer} />

      <footer className="flex h-7 shrink-0 items-stretch pr-[3px] text-[13px] text-[#dcdcdc]">
        <span className="-ml-[7px] flex w-[251px] items-center border-r border-[#2e2e2e] pt-[3px]">(Hotspot Snap)</span>
        <span className="w-[488px] border-r border-[#2e2e2e]" />
        <button type="button" className="mt-[5px] mb-px ml-auto rounded-[3px] border border-[#262626] bg-[#4e4e4e] px-1 text-[13px] leading-5 text-[#f0f0f0]">
          Panels
        </button>
      </footer>
    </div>
  );
}
